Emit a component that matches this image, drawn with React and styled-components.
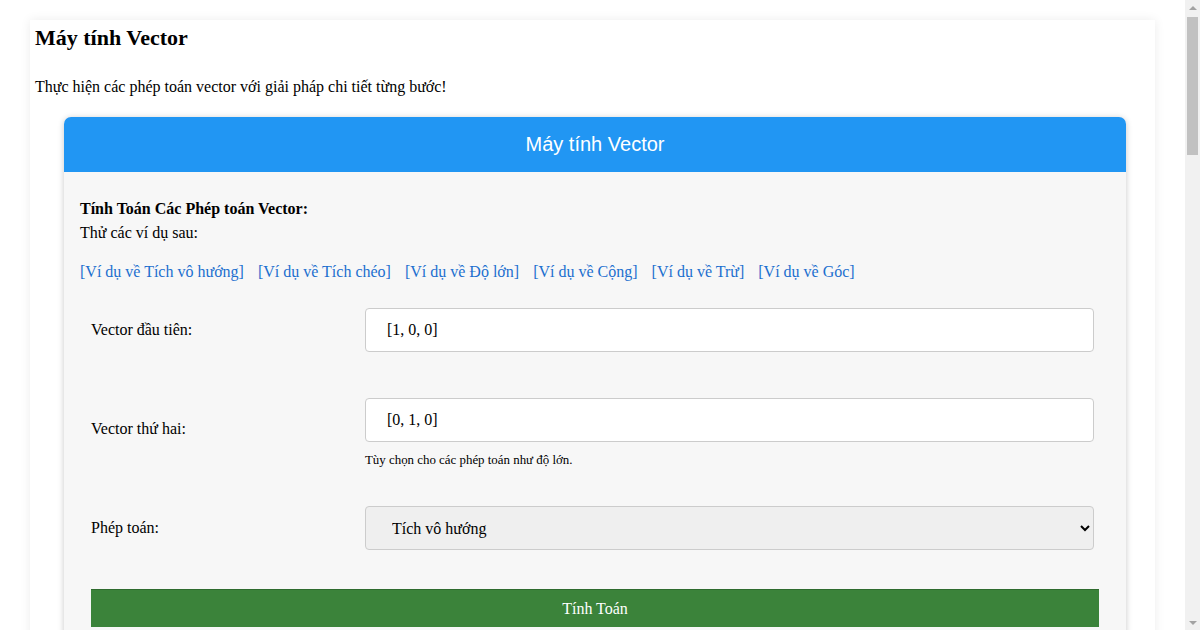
import React from "react";
import styled, { createGlobalStyle } from "styled-components";

const Global = createGlobalStyle`
  html, body { margin: 0; padding: 0; background: #ffffff; }
  body { font-family: "Liberation Serif", "Times New Roman", serif; color: #000; }
  * { box-sizing: border-box; }
`;

const Page = styled.div`
  padding: 20px 0 40px 30px;
`;

const Card = styled.div`
  width: 1125px;
  min-height: 2600px;
  padding: 5px;
  background: #fff;
  box-shadow: 0 0 10px rgba(0, 0, 0, 0.08);
`;

const Title = styled.h2`
  margin: 0;
  font-size: 22px;
  line-height: 26px;
  font-weight: bold;
`;

const Intro = styled.p`
  margin: 27px 0 0;
  font-size: 16px;
  line-height: 18px;
`;

const Widget = styled.div`
  width: 1062px;
  margin: 21px 0 0 29px;
  border-radius: 7px;
  background: #f7f7f7;
  box-shadow: 0 1px 6px rgba(0, 0, 0, 0.22);
`;

const WidgetHeader = styled.div`
  height: 55px;
  line-height: 55px;
  background: #2196f3;
  color: #fff;
  text-align: center;
  font-family: "Liberation Sans", Arial, sans-serif;
  font-size: 20px;
  border-radius: 7px 7px 0 0;
`;

const WidgetBody = styled.div`
  padding: 25px 16px 60px;
`;

const Lead = styled.div`
  font-size: 16px;
  line-height: 24px;
  font-weight: ${(p) => (p.$bold ? "bold" : "normal")};
`;

const Examples = styled.div`
  display: flex;
  gap: 14px;
  margin-top: 15px;
  line-height: 24px;
`;

const ExampleLink = styled.a`
  color: #1c6fcf;
  text-decoration: none;
  font-size: 16px;
  cursor: pointer;
`;

const Form = styled.div`
  margin-top: 24px;
  padding: 0 11px;
`;

const Row = styled.div`
  display: grid;
  grid-template-columns: 274px 729px;
  align-items: center;
  margin-top: ${(p) => p.$mt || 0}px;
`;

const Label = styled.label`
  font-size: 16px;
  line-height: 18px;
  margin-bottom: ${(p) => (p.$lift ? 8 : 0)}px;
`;

const Field = styled.div`
  display: flex;
  flex-direction: column;
`;

const TextInput = styled.input`
  height: 44px;
  width: 100%;
  padding: 0 21px;
  border: 1px solid #cccccc;
  border-radius: 4px;
  background: #fff;
  font-family: "Liberation Serif", "Times New Roman", serif;
  font-size: 16px;
  color: #000;
  outline: none;
`;

const Hint = styled.small`
  margin-top: 11px;
  font-size: 12.9px;
  line-height: 15px;
`;

const Select = styled.select`
  height: 44px;
  width: 100%;
  padding: 0 18px 0 22px;
  border: 1px solid #cccccc;
  border-radius: 4px;
  background-color: #efefef;
  font-family: "Liberation Serif", "Times New Roman", serif;
  font-size: 16px;
  color: #000;
`;

const SubmitButton = styled.button`
  display: block;
  width: 1008px;
  height: 38px;
  margin-top: 39px;
  border: none;
  border-top: 1px solid #2f6b2e;
  background: #3b833a;
  color: #fff;
  font-family: "Liberation Serif", "Times New Roman", serif;
  font-size: 16px;
  cursor: pointer;
`;

/* Window scrollbar, drawn over the right edge of the viewport */
const ScrollTrack = styled.div`
  position: fixed;
  top: 0;
  right: 0;
  width: 15px;
  height: 100vh;
  background: #f1f1f1;
  display: flex;
  flex-direction: column;
  align-items: center;
`;

const ScrollArrow = styled.div`
  height: 15px;
  width: 15px;
  display: flex;
  align-items: center;
  justify-content: center;
  &::before {
    content: "";
    border-left: 4px solid transparent;
    border-right: 4px solid transparent;
    ${(p) => (p.$down ? "border-top: 4px solid #a3a3a3;" : "border-bottom: 4px solid #a3a3a3;")}
  }
`;

const ScrollThumb = styled.div`
  width: 11px;
  height: 138px;
  margin-top: 2px;
  background: #c1c1c1;
`;

const ScrollSpacer = styled.div`
  flex: 1;
`;

const examples = [
  "[Ví dụ về Tích vô hướng]",
  "[Ví dụ về Tích chéo]",
  "[Ví dụ về Độ lớn]",
  "[Ví dụ về Cộng]",
  "[Ví dụ về Trừ]",
  "[Ví dụ về Góc]",
];

export default function App() {
  return (
    <>
      <Global />
      <Page>
        <Card>
          <Title>Máy tính Vector</Title>
          <Intro>Thực hiện các phép toán vector với giải pháp chi tiết từng bước!</Intro>
          <Widget>
            <WidgetHeader>Máy tính Vector</WidgetHeader>
            <WidgetBody>
              <Lead $bold>Tính Toán Các Phép toán Vector:</Lead>
              <Lead>Thử các ví dụ sau:</Lead>
              <Examples>
                {examples.map((e) => (
                  <ExampleLink key={e}>{e}</ExampleLink>
                ))}
              </Examples>
              <Form>
                <Row>
                  <Label>Vector đầu tiên:</Label>
                  <Field>
                    <TextInput defaultValue="[1, 0, 0]" />
                  </Field>
                </Row>
                <Row $mt={46}>
                  <Label $lift>Vector thứ hai:</Label>
                  <Field>
                    <TextInput defaultValue="[0, 1, 0]" />
                    <Hint>Tùy chọn cho các phép toán như độ lớn.</Hint>
                  </Field>
                </Row>
                <Row $mt={38}>
                  <Label>Phép toán:</Label>
                  <Field>
                    <Select defaultValue="dot">
                      <option value="dot">Tích vô hướng</option>
                      <option value="cross">Tích chéo</option>
                      <option value="mag">Độ lớn</option>
                      <option value="add">Cộng</option>
                      <option value="sub">Trừ</option>
                      <option value="angle">Góc</option>
                    </Select>
                  </Field>
                </Row>
                <SubmitButton>Tính Toán</SubmitButton>
              </Form>
            </WidgetBody>
          </Widget>
        </Card>
      </Page>
      <ScrollTrack aria-hidden="true">
        <ScrollArrow />
        <ScrollThumb />
        <ScrollSpacer />
        <ScrollArrow $down />
      </ScrollTrack>
    </>
  );
}
